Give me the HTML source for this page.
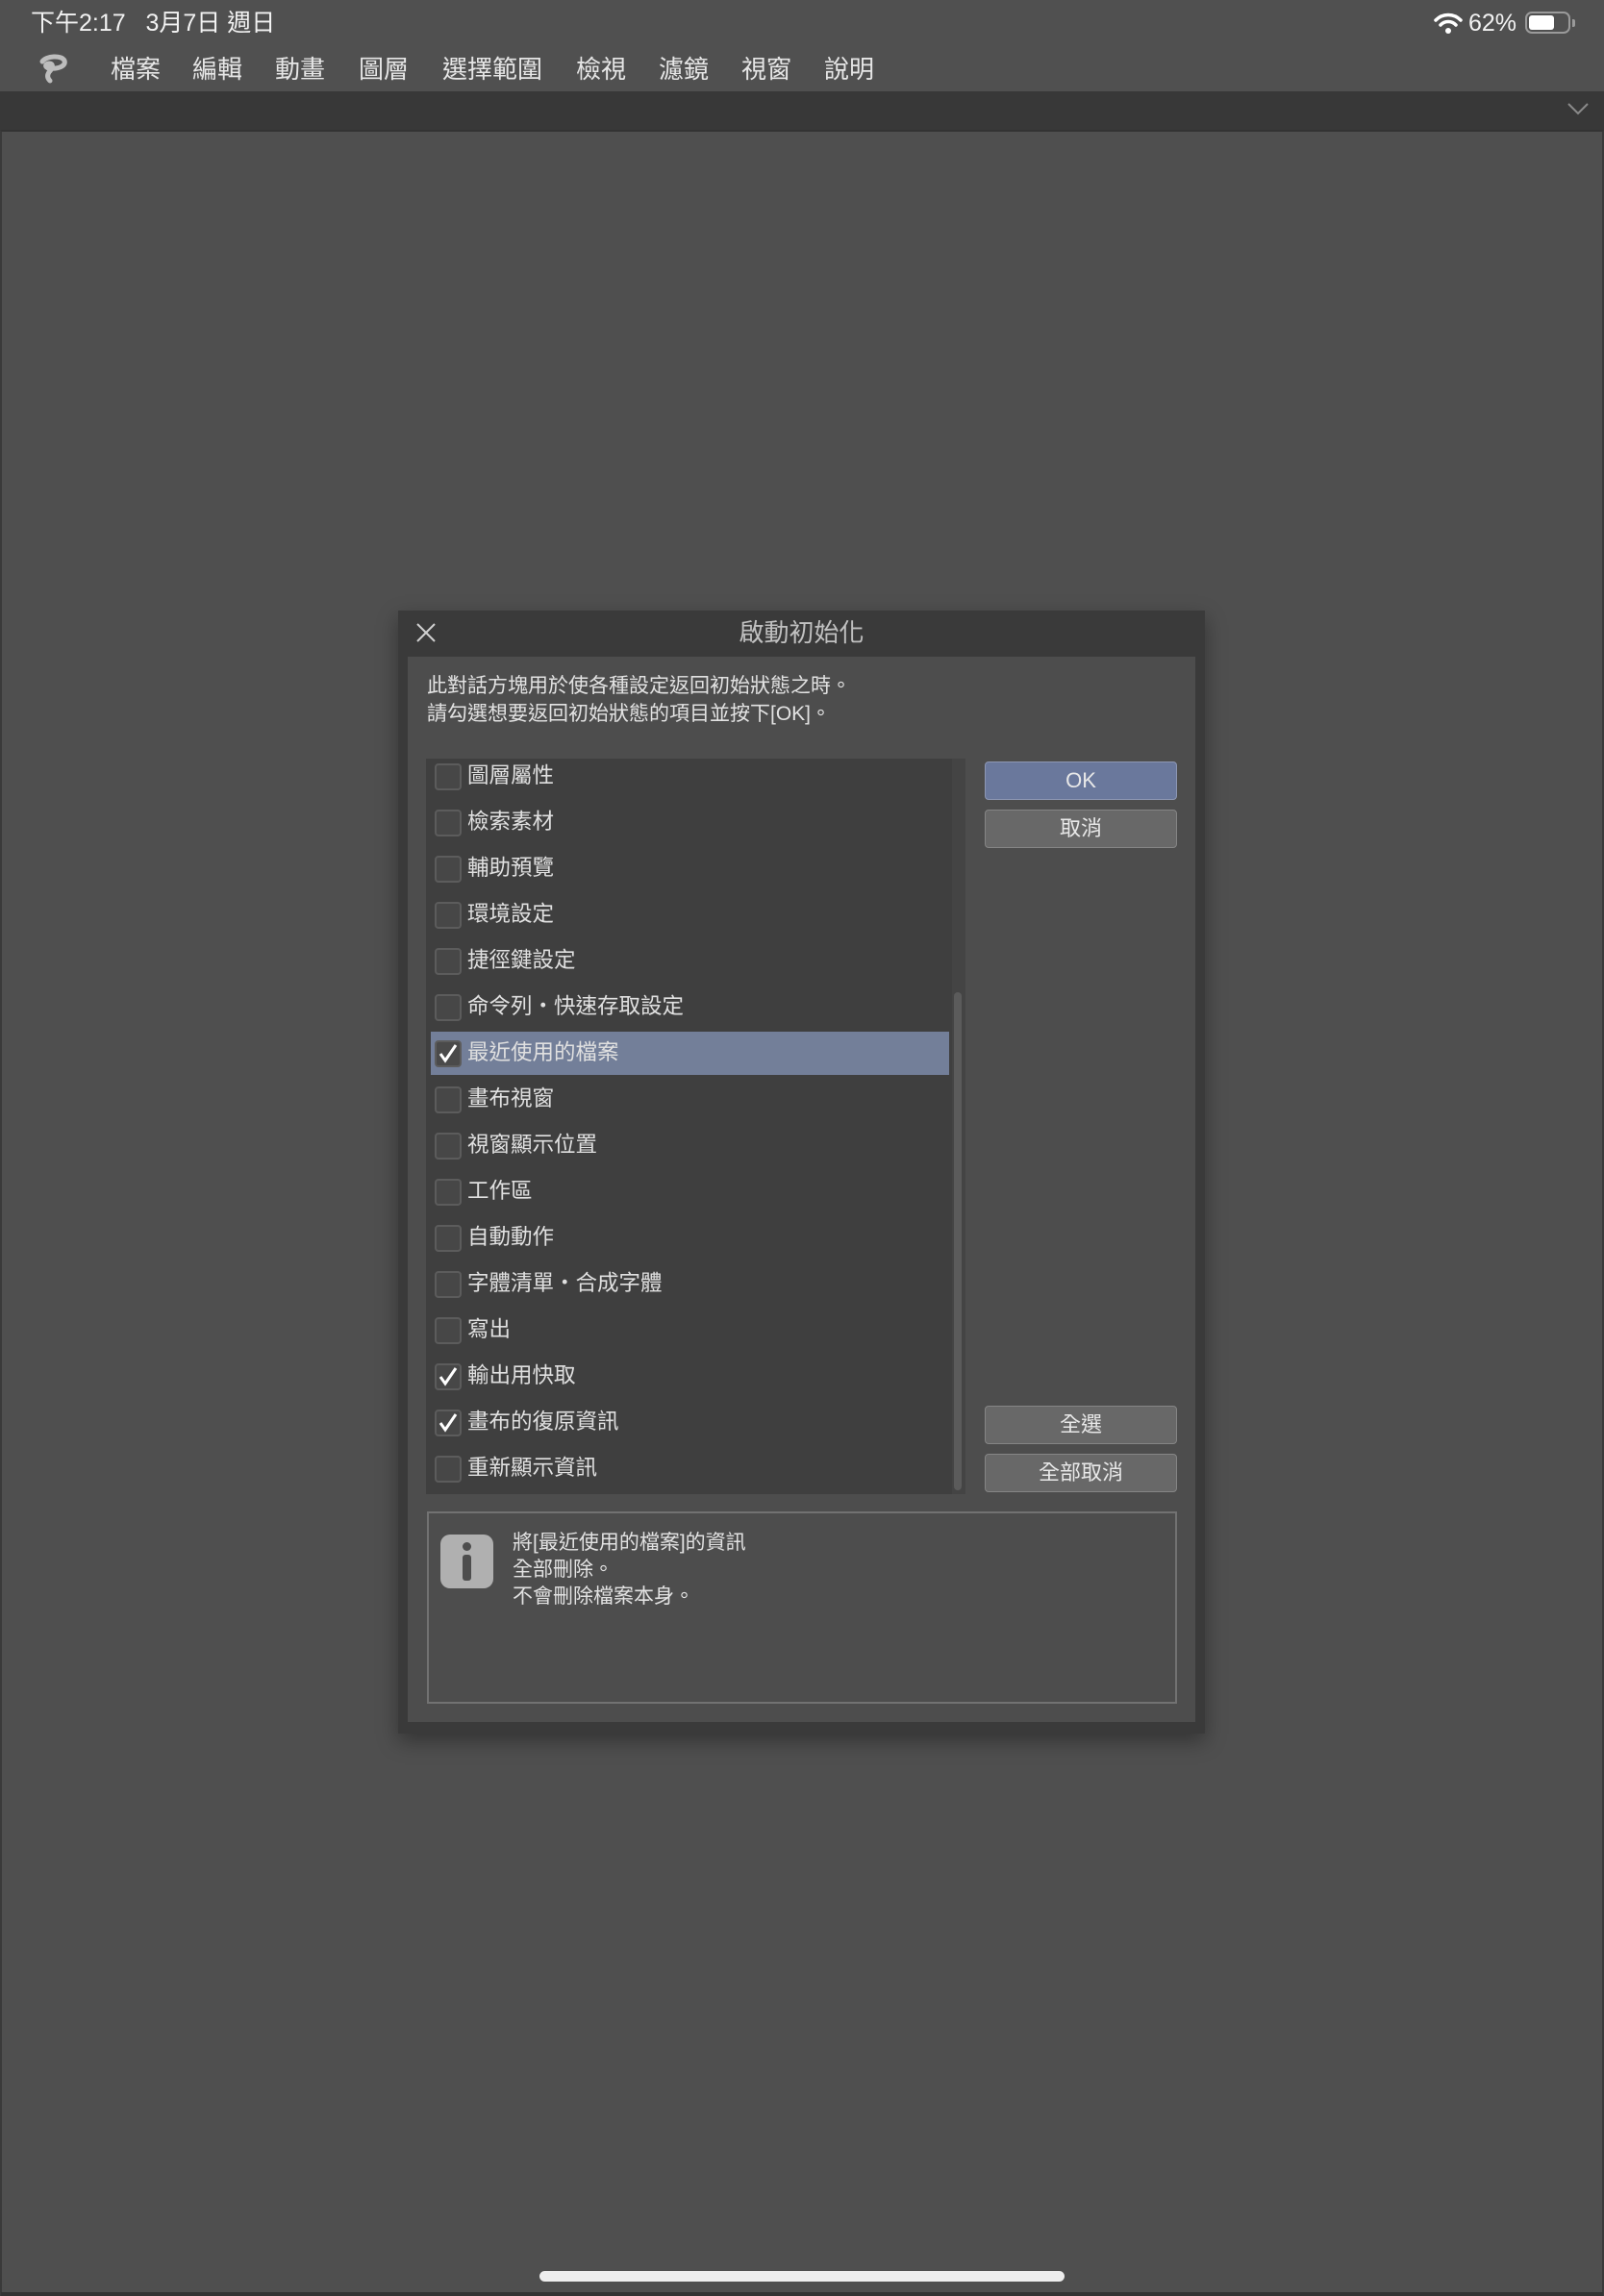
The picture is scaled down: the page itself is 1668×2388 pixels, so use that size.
<!DOCTYPE html>
<html><head><meta charset="utf-8"><style>
*{margin:0;padding:0;box-sizing:border-box}
body{width:1668px;height:2388px;background:#4f4f4f;position:relative;overflow:hidden;font-family:"Liberation Sans","Noto Sans CJK TC",sans-serif;color:#e2e2e2}
.a{position:absolute;white-space:nowrap}
.menu span{position:absolute;top:54px;font-size:26px;color:#e6e6e6;line-height:36px}
.row{position:absolute;left:448px;width:539px;height:45px}
.cb{position:absolute;left:4px;top:9px;width:28px;height:28px;border:2px solid #5c5c5c;background:#474747;border-radius:4px}
.row .t{position:absolute;left:38px;top:5px;font-size:22.5px;line-height:34px;color:#e0e0e0}
.btn{position:absolute;left:1024px;width:200px;height:40px;border:1.5px solid #858585;border-radius:4px;background:#686868;font-size:22px;text-align:center;line-height:37px;color:#e8e8e8}
</style></head><body>
<div class="a" style="left:0;top:0;width:1668px;height:95px;background:#505050"></div>
<div class="a" style="left:32px;top:8px;font-size:25px;line-height:32px;color:#f2f2f2">下午2:17&nbsp;&nbsp;&nbsp;3月7日 週日</div>
<svg class="a" style="left:1490px;top:12px" width="32" height="24" viewBox="0 0 32 24"><path d="M3 9a18 18 0 0 1 26 0" stroke="#fff" stroke-width="3.5" fill="none" stroke-linecap="round"/><path d="M8 14a11 11 0 0 1 16 0" stroke="#fff" stroke-width="3.5" fill="none" stroke-linecap="round"/><circle cx="16" cy="20" r="3" fill="#fff"/></svg>
<div class="a" style="left:1527px;top:8px;font-size:25px;line-height:32px;color:#f2f2f2">62%</div>
<div class="a" style="left:1586px;top:12px;width:47px;height:23px;border:2px solid #9a9a9a;border-radius:7px"></div>
<div class="a" style="left:1590px;top:16px;width:26px;height:15px;background:#fff;border-radius:3px"></div>
<div class="a" style="left:1635px;top:20px;width:3px;height:8px;background:#9a9a9a;border-radius:0 2px 2px 0"></div>
<svg class="a" style="left:36px;top:54px" width="38" height="34" viewBox="0 0 38 34"><path d="M8 10C12 4 28 3 31 9C33 15 24 18 15 17C10 16 11 12 15 12C20 12 19 17 15 21C13 24 13 27 16 30" stroke="#bdbdbd" stroke-width="5" fill="none" stroke-linecap="round"/></svg>
<div class="menu">
<span style="left:115px">檔案</span><span style="left:200px">編輯</span><span style="left:286px">動畫</span><span style="left:373px">圖層</span><span style="left:460px">選擇範圍</span><span style="left:599px">檢視</span><span style="left:685px">濾鏡</span><span style="left:771px">視窗</span><span style="left:857px">說明</span>
</div>
<div class="a" style="left:0;top:95px;width:1668px;height:40px;background:#383838"></div>
<svg class="a" style="left:1629px;top:106px" width="24" height="15" viewBox="0 0 24 15"><path d="M2 2L12 12L22 2" stroke="#8a8a8a" stroke-width="2" fill="none"/></svg>
<div class="a" style="left:0;top:135px;width:1668px;height:2253px;border:2px solid #3a3a3a;border-top-color:#333;background:#4f4f4f"></div>
<div class="a" style="left:1px;top:2384px;width:1666px;height:4px;background:#333"></div>
<div class="a" style="left:561px;top:2362px;width:546px;height:11px;background:#eeeeee;border-radius:6px"></div>

<div class="a" style="left:414px;top:635px;width:839px;height:1168px;background:#3a3a3a;box-shadow:0 8px 20px rgba(0,0,0,0.35)"></div>
<svg class="a" style="left:432px;top:647px" width="22" height="22" viewBox="0 0 22 22"><path d="M2 2L20 20M20 2L2 20" stroke="#d0d0d0" stroke-width="2"/></svg>
<div class="a" style="left:414px;width:839px;text-align:center;top:640px;font-size:26px;line-height:36px;color:#c0c0c0">啟動初始化</div>
<div class="a" style="left:424px;top:683px;width:819px;height:1108px;background:#4d4d4d"></div>
<div class="a" style="left:444px;top:699px;font-size:21px;line-height:29px;color:#e2e2e2">此對話方塊用於使各種設定返回初始狀態之時。<br>請勾選想要返回初始狀態的項目並按下[OK]。</div>

<div class="a" style="left:443px;top:789px;width:561px;height:765px;background:#3f3f3f"></div>
<div class="a" style="left:990px;top:789px;width:14px;height:765px;background:#444"></div>
<div class="a" style="left:992px;top:1032px;width:8px;height:518px;background:#5b5b5b;border-radius:4px"></div>

<div class="row" style="top:785px"><div class="cb"></div><div class="t">圖層屬性</div></div>
<div class="row" style="top:833px"><div class="cb"></div><div class="t">檢索素材</div></div>
<div class="row" style="top:881px"><div class="cb"></div><div class="t">輔助預覽</div></div>
<div class="row" style="top:929px"><div class="cb"></div><div class="t">環境設定</div></div>
<div class="row" style="top:977px"><div class="cb"></div><div class="t">捷徑鍵設定</div></div>
<div class="row" style="top:1025px"><div class="cb"></div><div class="t">命令列・快速存取設定</div></div>
<div class="row" style="top:1073px;background:#737f99"><div class="cb" style="background:#4a4a4a"><svg width="24" height="24" viewBox="0 0 24 24" style="position:absolute;left:0;top:0"><path d="M4 12L9 19L20 3" stroke="#fff" stroke-width="3" fill="none"/></svg></div><div class="t">最近使用的檔案</div></div>
<div class="row" style="top:1121px"><div class="cb"></div><div class="t">畫布視窗</div></div>
<div class="row" style="top:1169px"><div class="cb"></div><div class="t">視窗顯示位置</div></div>
<div class="row" style="top:1217px"><div class="cb"></div><div class="t">工作區</div></div>
<div class="row" style="top:1265px"><div class="cb"></div><div class="t">自動動作</div></div>
<div class="row" style="top:1313px"><div class="cb"></div><div class="t">字體清單・合成字體</div></div>
<div class="row" style="top:1361px"><div class="cb"></div><div class="t">寫出</div></div>
<div class="row" style="top:1409px"><div class="cb"><svg width="24" height="24" viewBox="0 0 24 24" style="position:absolute;left:0;top:0"><path d="M4 12L9 19L20 3" stroke="#fff" stroke-width="3" fill="none"/></svg></div><div class="t">輸出用快取</div></div>
<div class="row" style="top:1457px"><div class="cb"><svg width="24" height="24" viewBox="0 0 24 24" style="position:absolute;left:0;top:0"><path d="M4 12L9 19L20 3" stroke="#fff" stroke-width="3" fill="none"/></svg></div><div class="t">畫布的復原資訊</div></div>
<div class="row" style="top:1505px"><div class="cb"></div><div class="t">重新顯示資訊</div></div>

<div class="btn" style="top:792px;background:#6a789c;border-color:#8d97b3">OK</div>
<div class="btn" style="top:842px">取消</div>
<div class="btn" style="top:1462px">全選</div>
<div class="btn" style="top:1512px">全部取消</div>

<div class="a" style="left:444px;top:1572px;width:780px;height:200px;border:2px solid #727272"></div>
<div class="a" style="left:458px;top:1596px;width:55px;height:56px;background:#b0b0b0;border-radius:10px"></div>
<div class="a" style="left:481px;top:1604px;width:9px;height:9px;background:#4d4d4d;border-radius:50%"></div>
<div class="a" style="left:481px;top:1617px;width:9px;height:27px;background:#4d4d4d;border-radius:3px"></div>
<div class="a" style="left:533px;top:1591px;font-size:21px;line-height:28px;color:#e2e2e2">將[最近使用的檔案]的資訊<br>全部刪除。<br>不會刪除檔案本身。</div>
</body></html>
